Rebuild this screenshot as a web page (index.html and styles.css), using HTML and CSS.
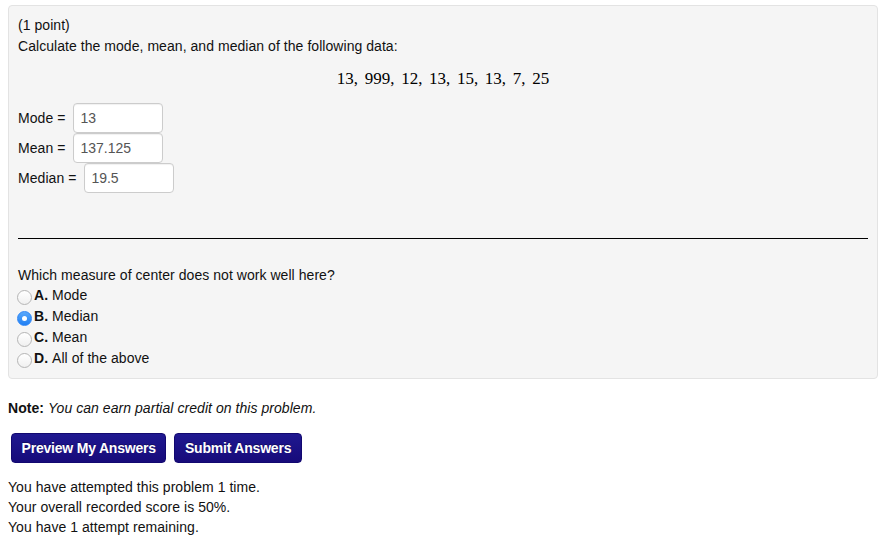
FILE: index.html
```html
<!DOCTYPE html>
<html>
<head>
<meta charset="utf-8">
<link rel="stylesheet" href="styles.css">
</head>
<body>
<div class="problem">
  <div class="line">(1 point)</div>
  <div class="line">Calculate the mode, mean, and median of the following data:</div>
  <div class="data">13, 999, 12, 13, 15, 13, 7, 25</div>
  <div class="answers">
    <div class="ans-row"><span class="lbl">Mode =</span><input class="ans" type="text" value="13"></div>
    <div class="ans-row"><span class="lbl">Mean =</span><input class="ans" type="text" value="137.125"></div>
    <div class="ans-row"><span class="lbl">Median =</span><input class="ans" type="text" value="19.5"></div>
  </div>
  <hr class="rule">
  <div class="line question">Which measure of center does not work well here?</div>
  <div class="choices">
    <label class="choice"><input class="radio" type="radio" name="c"><b>A.</b>&nbsp;Mode</label>
    <label class="choice"><input class="radio" type="radio" name="c" checked><b>B.</b>&nbsp;Median</label>
    <label class="choice"><input class="radio" type="radio" name="c"><b>C.</b>&nbsp;Mean</label>
    <label class="choice"><input class="radio" type="radio" name="c"><b>D.</b>&nbsp;All of the above</label>
  </div>
</div>
<div class="note"><b>Note:</b> <i>You can earn partial credit on this problem.</i></div>
<div class="buttons">
  <button class="btn">Preview My Answers</button>
  <button class="btn">Submit Answers</button>
</div>
<div class="status">
  <div>You have attempted this problem 1 time.</div>
  <div>Your overall recorded score is 50%.</div>
  <div>You have 1 attempt remaining.</div>
</div>
</body>
</html>
```
FILE: styles.css
```css
html, body {
  margin: 0;
  padding: 0;
  background: #fff;
}
body {
  padding: 5px 13px 0 8px;
  font-family: "Liberation Sans", Arial, Helvetica, sans-serif;
  font-size: 14px;
  line-height: 20px;
  color: #111;
  letter-spacing: 0.05px;
}
.problem {
  background: #f5f5f5;
  border: 1px solid #e3e3e3;
  border-radius: 4px;
  padding: 9px 9px 10px 9px;
}
.line {
  line-height: 21px;
}
.data {
  margin-top: 11px;
  text-align: center;
  font-family: "Liberation Serif", "Times New Roman", serif;
  font-size: 17px;
  line-height: 21px;
  word-spacing: 2.4px;
  letter-spacing: 0;
  color: #000;
}
.answers {
  margin-top: 14px;
  display: flex;
  flex-direction: column;
}
.ans-row {
  display: flex;
  align-items: center;
  height: 30px;
}
.lbl {
  margin-right: 8px;
}
.ans {
  box-sizing: border-box;
  width: 90px;
  height: 30px;
  margin: 0;
  padding: 4px 6px;
  border: 1px solid #cccccc;
  border-radius: 4px;
  background: #fff;
  color: #555;
  font-family: "Liberation Sans", Arial, Helvetica, sans-serif;
  font-size: 14px;
  box-shadow: inset 0 1px 1px rgba(0,0,0,0.06);
}
.rule {
  margin: 45px 0 0 0;
  border: 0;
  border-top: 1px solid #000;
  height: 0;
}
.question {
  margin-top: 27px;
  line-height: 18px;
}
.choices {
  display: flex;
  flex-direction: column;
}
.choice {
  display: flex;
  align-items: center;
  height: 21px;
}
.radio {
  -webkit-appearance: none;
  appearance: none;
  box-sizing: border-box;
  width: 15px;
  height: 15px;
  margin: 6px 2px 0 -1px;
  border: 1px solid #b5b5b5;
  border-radius: 50%;
  background: linear-gradient(#ffffff, #f0f0f0);
  flex: none;
  position: relative;
}
.radio:checked {
  border-color: #2f86f5;
  background: linear-gradient(#5aa9fb, #1f7ff3);
}
.radio:checked::after {
  content: "";
  position: absolute;
  left: 4px;
  top: 4px;
  width: 5px;
  height: 5px;
  border-radius: 50%;
  background: #fff;
}
.note {
  margin-top: 19px;
}
.buttons {
  margin-top: 15px;
  display: flex;
  gap: 8px;
  padding-left: 3px;
}
.btn {
  box-sizing: border-box;
  height: 30px;
  padding: 0 9.5px;
  border: 1px solid #120870;
  border-radius: 4px;
  background: linear-gradient(#1f1890, #170b7a);
  color: #fff;
  font-family: "Liberation Sans", Arial, Helvetica, sans-serif;
  font-size: 14px;
  font-weight: bold;
  text-shadow: 0 -1px 0 rgba(0,0,0,0.3);
  letter-spacing: -0.2px;
}
.status {
  margin-top: 14px;
}
```
